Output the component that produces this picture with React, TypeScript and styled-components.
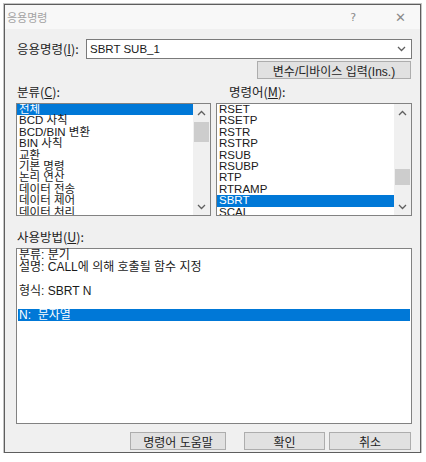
import React from "react";
import styled, { createGlobalStyle } from "styled-components";

const GlobalStyle = createGlobalStyle`
  html, body {
    margin: 0;
    padding: 0;
    background: #ffffff;
  }
  body {
    font-family: "Liberation Sans", "Noto Sans CJK KR", sans-serif;
    color: #1b1b1b;
  }
`;

const categories = [
  "전체",
  "BCD 사칙",
  "BCD/BIN 변환",
  "BIN 사칙",
  "교환",
  "기본 명령",
  "논리 연산",
  "데이터 전송",
  "데이터 제어",
  "데이터 처리"
];

const commands = [
  "RSET",
  "RSETP",
  "RSTR",
  "RSTRP",
  "RSUB",
  "RSUBP",
  "RTP",
  "RTRAMP",
  "SBRT",
  "SCAL"
];

function Chevron({ up }: { up?: boolean }) {
  return (
    <svg width="9" height="6" viewBox="0 0 9 6">
      <polyline
        points={up ? "1,5 4.5,1.5 8,5" : "1,1 4.5,4.5 8,1"}
        fill="none"
        stroke="#5f5f5f"
        strokeWidth="1.3"
      />
    </svg>
  );
}

function ListBox({
  items,
  selected,
  thumbTop,
  thumbHeight
}: {
  items: string[];
  selected: number;
  thumbTop: number;
  thumbHeight: number;
}) {
  return (
    <ListFrame>
      <ListItems>
        {items.map((item, key) => (
          <ListItem key={key} $active={key === selected}>
            {item}
          </ListItem>
        ))}
      </ListItems>
      <ScrollBar>
        <ScrollArrow>
          <Chevron up />
        </ScrollArrow>
        <ScrollTrack>
          <Thumb $top={thumbTop} $height={thumbHeight} />
        </ScrollTrack>
        <ScrollArrow>
          <Chevron />
        </ScrollArrow>
      </ScrollBar>
    </ListFrame>
  );
}

export default function App() {
  return (
    <>
      <GlobalStyle />
      <Window>
        <TitleBar>
          <TitleText>응용명령</TitleText>
          <TitleButtons>
            <TitleGlyph>?</TitleGlyph>
            <TitleGlyph $big>✕</TitleGlyph>
          </TitleButtons>
        </TitleBar>
        <Body>
          <ComboRow>
            <Label $width={69}>
              응용명령(<u>I</u>):
            </Label>
            <Combo>
              <ComboText>SBRT SUB_1</ComboText>
              <ComboArrow>
                <Chevron />
              </ComboArrow>
            </Combo>
          </ComboRow>
          <InsRow>
            <Button $width={154}>변수/디바이스 입력(Ins.)</Button>
          </InsRow>
          <ListsGrid>
            <Label>
              분류(<u>C</u>):
            </Label>
            <Label $indent={12}>
              명령어(<u>M</u>):
            </Label>
            <ListBox items={categories} selected={0} thumbTop={1} thumbHeight={20} />
            <ListBox items={commands} selected={8} thumbTop={48} thumbHeight={16} />
          </ListsGrid>
          <UsageLabel>
            사용방법(<u>U</u>):
          </UsageLabel>
          <UsageBox>
            <UsageLine>분류: 분기</UsageLine>
            <UsageLine>설명: CALL에 의해 호출될 함수 지정</UsageLine>
            <UsageLine />
            <UsageLine>형식: SBRT N</UsageLine>
            <UsageLine />
            <UsageLine $active>N:&nbsp; 문자열</UsageLine>
          </UsageBox>
          <ButtonRow>
            <Button $width={96}>명령어 도움말</Button>
            <Button $width={81} $gap={18}>
              확인
            </Button>
            <Button $width={82} $gap={4}>
              취소
            </Button>
          </ButtonRow>
        </Body>
      </Window>
    </>
  );
}

const Window = styled.div`
  margin: 4px 0 0 4px;
  width: 417px;
  box-sizing: border-box;
  border: 1px solid #5e5e5e;
  box-shadow: 0 0 0 1px rgba(90, 90, 90, 0.35);
  background: #f0f0f0;
`;

const TitleBar = styled.div`
  height: 24px;
  display: flex;
  align-items: center;
  justify-content: space-between;
  padding: 0 0 0 2px;
  background: #f8f8f8;
`;

const TitleText = styled.span`
  font-family: "Noto Sans CJK KR", sans-serif;
  font-size: 11px;
  color: #a3a3a3;
`;

const TitleButtons = styled.div`
  display: flex;
  align-items: center;
  gap: 39px;
  padding-right: 14px;
`;

const TitleGlyph = styled.span<{ $big?: boolean }>`
  font-family: "DejaVu Sans", sans-serif;
  font-size: ${({ $big }) => ($big ? "13px" : "11px")};
  color: #8a8a8a;
`;

const Body = styled.div`
  padding: 10px 8px 2px 11px;
`;

const ComboRow = styled.div`
  display: flex;
  align-items: center;
  height: 20px;
`;

const Label = styled.div<{ $width?: number; $indent?: number }>`
  width: ${({ $width }) => ($width ? `${$width}px` : "auto")};
  flex-shrink: 0;
  padding-left: ${({ $indent }) => ($indent ? `${$indent + 1}px` : "1px")};
  font-family: "Noto Sans CJK KR", sans-serif;
  font-size: 12.5px;
  line-height: 14px;
  color: #222;
  & u {
    text-underline-offset: 1px;
  }
`;

const Combo = styled.div`
  flex: 1;
  height: 20px;
  box-sizing: border-box;
  display: flex;
  align-items: center;
  justify-content: space-between;
  background: #fff;
  border: 1px solid #7a7a7a;
`;

const ComboText = styled.span`
  font-size: 11.5px;
  padding-left: 3px;
  color: #1a1a1a;
`;

const ComboArrow = styled.span`
  display: flex;
  padding-right: 5px;
`;

const InsRow = styled.div`
  display: flex;
  justify-content: flex-end;
  margin-top: 2px;
  padding-right: 1px;
`;

const Button = styled.div<{ $width: number; $gap?: number }>`
  width: ${({ $width }) => $width}px;
  margin-left: ${({ $gap }) => ($gap ? `${$gap}px` : "0")};
  height: 18px;
  box-sizing: border-box;
  display: flex;
  align-items: center;
  justify-content: center;
  background: #e1e1e1;
  border: 1px solid #adadad;
  font-family: "Liberation Sans", "Noto Sans CJK KR", sans-serif;
  font-size: 12px;
  color: #1e1e1e;
`;

const ListsGrid = styled.div`
  display: grid;
  grid-template-columns: 195px 196px;
  column-gap: 5px;
  row-gap: 4px;
  margin-top: 6px;
`;

const ListFrame = styled.div`
  height: 113px;
  box-sizing: border-box;
  display: flex;
  background: #fff;
  border: 1px solid #828282;
  overflow: hidden;
`;

const ListItems = styled.div`
  flex: 1;
  overflow: hidden;
`;

const ListItem = styled.div<{ $active: boolean }>`
  height: 11.4px;
  line-height: 11.4px;
  padding-left: 2px;
  font-size: 11.5px;
  white-space: nowrap;
  background: ${({ $active }) => ($active ? "#0078d7" : "transparent")};
  color: ${({ $active }) => ($active ? "#fff" : "#1a1a1a")};
`;

const ScrollBar = styled.div`
  width: 17px;
  display: flex;
  flex-direction: column;
  background: #f0f0f0;
`;

const ScrollArrow = styled.div`
  height: 17px;
  display: flex;
  align-items: center;
  justify-content: center;
`;

const ScrollTrack = styled.div`
  flex: 1;
  display: flex;
  flex-direction: column;
  align-items: center;
`;

const Thumb = styled.div<{ $top: number; $height: number }>`
  margin-top: ${({ $top }) => $top}px;
  height: ${({ $height }) => $height}px;
  width: 15px;
  background: #cdcdcd;
`;

const UsageLabel = styled(Label)`
  margin-top: 14px;
  margin-bottom: 4px;
`;

const UsageBox = styled.div`
  height: 176px;
  box-sizing: border-box;
  background: #fff;
  border: 1px solid #828282;
  padding: 0 1px;
`;

const UsageLine = styled.div<{ $active?: boolean }>`
  height: 12px;
  line-height: 12px;
  padding-left: 1px;
  font-size: 12px;
  white-space: nowrap;
  background: ${({ $active }) => ($active ? "#0078d7" : "transparent")};
  color: ${({ $active }) => ($active ? "#fff" : "#1a1a1a")};
`;

const ButtonRow = styled.div`
  display: flex;
  justify-content: flex-end;
  margin-top: 8px;
  padding-right: 1px;
`;
